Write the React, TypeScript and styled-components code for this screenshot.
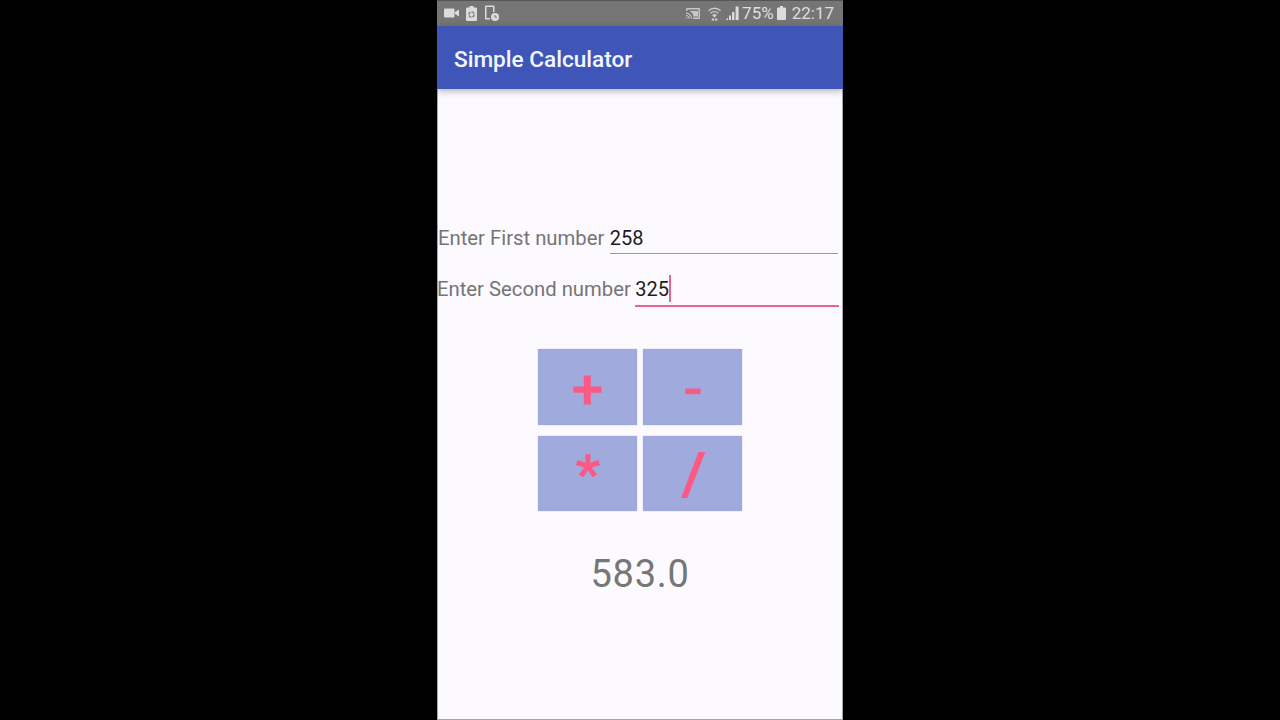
import React from "react";
import styled, { createGlobalStyle } from "styled-components";

const Global = createGlobalStyle`
  html, body { margin: 0; padding: 0; background: #000; height: 100%; overflow: hidden; }
  #root { height: 100%; }
`;

const Stage = styled.div`
  height: 720px;
  display: flex;
  justify-content: center;
  background: #000;
  font-family: Roboto, "Liberation Sans", sans-serif;
`;

const Phone = styled.div`
  width: 406px;
  height: 720px;
  box-sizing: border-box;
  display: flex;
  flex-direction: column;
  background: #fcfaff;
  box-shadow: inset 1px 0 0 #a5a5a5, inset -1px 0 0 #a5a5a5, inset 0 -1px 0 #a5a5a5;
`;

const StatusBar = styled.div`
  height: 26px;
  flex: none;
  box-sizing: border-box;
  border-top: 1px solid #555;
  background: #757575;
  display: flex;
  align-items: center;
  justify-content: space-between;
  padding: 0 9px 1px 7px;
  color: #e6e6e6;
`;

const StatusGroup = styled.div<{ $gap: number }>`
  display: flex;
  align-items: center;
  gap: ${(p) => p.$gap}px;
`;

const StatusText = styled.span<{ $ml?: number }>`
  font-family: Roboto, sans-serif;
  font-size: 17px;
  line-height: 24px;
  color: #dedede;
  margin-left: ${(p) => p.$ml ?? 0}px;
`;

const Toolbar = styled.header`
  height: 63px;
  flex: none;
  box-sizing: border-box;
  display: flex;
  align-items: center;
  padding: 3px 0 0 17px;
  background: #3f56b8;
  box-shadow: 0 2px 7px rgba(0, 0, 0, 0.3);
  color: #f4f6ff;
  font-size: 22.6px;
  font-weight: 500;
  position: relative;
`;

const Content = styled.main`
  flex: 1;
  display: flex;
  flex-direction: column;
  padding-top: 133px;
`;

const Row = styled.div<{ $left: number; $right: number; $mb: number }>`
  display: flex;
  align-items: stretch;
  height: 32px;
  margin-bottom: ${(p) => p.$mb}px;
  padding-left: ${(p) => p.$left}px;
  padding-right: ${(p) => p.$right}px;
`;

const Label = styled.span`
  font-size: 20.3px;
  line-height: 33px;
  color: #757575;
  white-space: pre;
`;

const Field = styled.div<{ $active?: boolean; $gap: number }>`
  flex: 1;
  box-sizing: border-box;
  display: flex;
  align-items: flex-start;
  height: ${(p) => (p.$active ? 34 : 32)}px;
  margin-left: ${(p) => p.$gap}px;
  border-bottom: ${(p) => (p.$active ? "2px solid #e8648c" : "1.5px solid #9a9a9a")};
  font-size: 20px;
  line-height: 33px;
  color: #1d1d1d;
`;

const Caret = styled.span`
  width: 2px;
  height: 27px;
  margin-top: 2px;
  background: #e8648c;
`;

const Pad = styled.div`
  align-self: center;
  display: grid;
  grid-template-columns: 99.5px 99.5px;
  grid-auto-rows: 75.5px;
  column-gap: 5.5px;
  row-gap: 11px;
  margin-top: 44px;
`;

const Key = styled.button`
  padding: 0;
  border: 0;
  border-radius: 0;
  background: #a1aadc;
  box-shadow: 0 0 1px rgba(120, 130, 190, 0.6);
  display: flex;
  align-items: center;
  justify-content: center;
`;

const KeyGlyph = styled.svg`
  width: 100px;
  height: 76px;
  display: block;
  flex: none;
  fill: #fb5a85;
`;

const Result = styled.div`
  margin-top: 41px;
  text-align: center;
  font-size: 38px;
  line-height: 44px;
  letter-spacing: 0.7px;
  color: #767676;
`;

const Ico = styled.svg<{ $mr?: number }>`
  display: block;
  fill: #dcdcdc;
  margin-right: ${(p) => p.$mr ?? 0}px;
`;

export default function App() {
  return (
    <>
      <Global />
      <Stage>
        <Phone>
          <StatusBar>
            <StatusGroup $gap={7}>
              <Ico width="15" height="10" viewBox="0 0 15 10">
                <rect x="0" y="0.5" width="10.5" height="9" rx="1" />
                <path d="M11 4 L15 1.5 V8.5 L11 6 Z" />
              </Ico>
              <Ico width="11" height="15" viewBox="0 0 11 15">
                <path d="M3.5 0h4v1.5H10a1 1 0 0 1 1 1V14a1 1 0 0 1-1 1H1a1 1 0 0 1-1-1V2.5a1 1 0 0 1 1-1h2.5z" />
                <circle cx="5.5" cy="8.5" r="2.6" fill="none" stroke="#757575" strokeWidth="1.4" strokeDasharray="3 1" />
              </Ico>
              <Ico width="15" height="16" viewBox="0 0 15 16">
                <path d="M2 0.5h7.5a1 1 0 0 1 1 1V7H9V2H2.5v11H6v1.5H2a1 1 0 0 1-1-1V1.5a1 1 0 0 1 1-1z" />
                <circle cx="11" cy="12" r="4" />
                <path d="M11 10v2.2h2" fill="none" stroke="#757575" strokeWidth="1" />
              </Ico>
            </StatusGroup>
            <StatusGroup $gap={3}>
              <Ico width="14" height="11" viewBox="0 0 14 11" $mr={5}>
                <path d="M1 0h12a1 1 0 0 1 1 1v9a1 1 0 0 1-1 1H7V9.6h5.6V1.4H1.4V3H0V1a1 1 0 0 1 1-1z" opacity="0.8" />
                <path d="M0 4.5a6 6 0 0 1 6 6H4.8A4.8 4.8 0 0 0 0 5.7zM0 7a3.5 3.5 0 0 1 3.5 3.5H2.4A2.4 2.4 0 0 0 0 8.1zM0 9.2a1.4 1.4 0 0 1 1.4 1.4H0z" opacity="0.8" />
                <path d="M6 3h6v5.5H7.5A7 7 0 0 0 3.5 3z" opacity="0.8" />
              </Ico>
              <Ico width="13" height="15" viewBox="0 0 14 15" $mr={2}>
                <path d="M0 4a10 10 0 0 1 14 0l-1 1.2a8.4 8.4 0 0 0-12 0zM2.2 6.6a7 7 0 0 1 9.6 0l-1 1.2a5.4 5.4 0 0 0-7.6 0zM4.4 9.2a4 4 0 0 1 5.2 0L7 12z" opacity="0.85" />
                <rect x="4" y="13" width="2.5" height="2" />
                <rect x="7.5" y="13" width="2.5" height="2" />
              </Ico>
              <Ico width="13" height="14" viewBox="0 0 13 14">
                <path d="M0 14l2-2.5V14z" />
                <rect x="3" y="9.5" width="2" height="4.5" />
                <rect x="6" y="6" width="2.4" height="8" />
                <rect x="9.6" y="0.5" width="3" height="13.5" />
              </Ico>
              <StatusText>75%</StatusText>
              <Ico width="9" height="14" viewBox="0 0 9 14">
                <path d="M3 0h3v1.5h2a1 1 0 0 1 1 1V13a1 1 0 0 1-1 1H1a1 1 0 0 1-1-1V2.5a1 1 0 0 1 1-1h2z" />
              </Ico>
              <StatusText $ml={3}>22:17</StatusText>
            </StatusGroup>
          </StatusBar>
          <Toolbar>Simple Calculator</Toolbar>
          <Content>
            <Row $left={1} $right={5} $mb={19}>
              <Label>Enter First number</Label>
              <Field $gap={5.5}>258</Field>
            </Row>
            <Row $left={0} $right={4} $mb={0}>
              <Label>Enter Second number</Label>
              <Field $active $gap={4.5}>
                325
                <Caret />
              </Field>
            </Row>
            <Pad>
              <Key aria-label="+">
                <KeyGlyph viewBox="0 0 100 76">
                  <path d="M45.8 26.5h7v11h10.7v6.2H52.8v11.8h-7V43.7H35.3v-6.2h10.5z" />
                </KeyGlyph>
              </Key>
              <Key aria-label="-">
                <KeyGlyph viewBox="0 0 100 76">
                  <rect x="42.3" y="39.6" width="15.3" height="5.6" />
                </KeyGlyph>
              </Key>
              <Key aria-label="*">
                <KeyGlyph viewBox="0 0 100 76">
                  <path d="M47.2 19.3h5.4l-.3 8.4 8.1-2.7 1.6 5.1-8.3 2.3 5.3 7.2-4.4 3-4.7-7.3-4.7 7.3-4.4-3 5.4-7.2-8.3-2.3 1.7-5.1 7.9 2.7z" />
                </KeyGlyph>
              </Key>
              <Key aria-label="/">
                <KeyGlyph viewBox="0 0 100 76">
                  <path d="M55.5 17h6.8L44.3 63H38z" />
                </KeyGlyph>
              </Key>
            </Pad>
            <Result>583.0</Result>
          </Content>
        </Phone>
      </Stage>
    </>
  );
}
